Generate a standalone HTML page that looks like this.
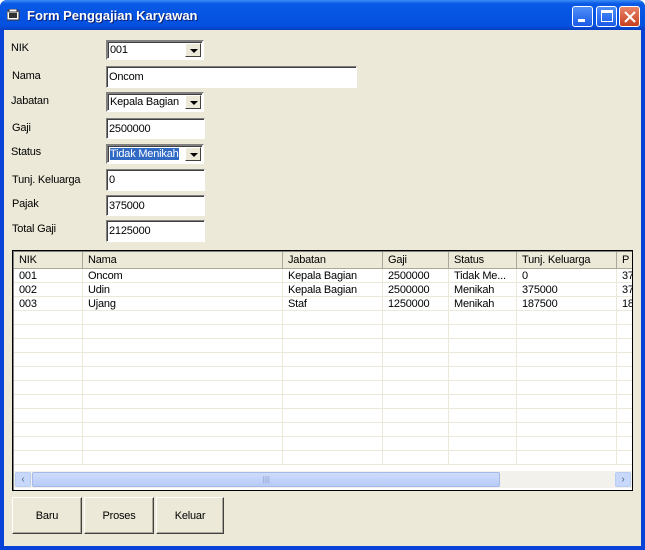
<!DOCTYPE html>
<html><head><style>
*{margin:0;padding:0;box-sizing:border-box}
body{width:645px;height:550px;overflow:hidden;background:#fff;font-family:Tahoma,"Liberation Sans",sans-serif;font-size:11px;color:#000;letter-spacing:-0.2px}
.win{position:absolute;left:0;top:0;width:645px;height:550px;background:#0842d6;border-radius:7px 7px 0 0}
.title{position:absolute;left:0;top:0;width:645px;height:30px;border-radius:7px 7px 0 0;background:linear-gradient(#3d8df5 0,#0a5ae6 12%,#0554e3 50%,#0550df 85%,#0a3fbf 100%)}
.title span{position:absolute;left:27px;top:8px;color:#fff;font-weight:bold;font-size:13px;text-shadow:1px 1px #0a1f70;letter-spacing:0}
.client{position:absolute;left:4px;top:30px;width:637px;height:516px;background:#ece9d8}
.a{position:absolute}
.lbl{position:absolute;font-size:11px}
.tb{position:absolute;background:#fff;border:1px solid #fff;border-top-color:#808080;border-left-color:#808080;padding:4px 2px 0;font-size:11px;line-height:13px;box-shadow:inset 1px 1px #404040}
.cb{position:absolute;background:#fff;border:2px solid;border-color:#808080 #fff #fff #808080;box-shadow:inset 1px 1px #404040;font-size:11px;padding:2px 2px;line-height:13px}
.dd{position:absolute;right:1px;top:1px;width:16px;height:14px;background:#ece9d8;border:1px solid;border-color:#fff #404040 #404040 #fff}
.dd:after{content:"";position:absolute;left:4px;top:5px;border-left:4px solid transparent;border-right:4px solid transparent;border-top:4px solid #000}
.btn{position:absolute;background:#ece9d8;border:1px solid;border-color:#fff #404040 #404040 #fff;box-shadow:inset -1px -1px #aca899;text-align:center;line-height:36px}
.grid{position:absolute;left:12px;top:250px;width:621px;height:241px;border:1px solid #000;background:#fff;box-shadow:inset 1px 1px #808080;overflow:hidden}
.row{position:absolute;left:1px;height:14px;width:620px;border-bottom:1px solid #ece9d8}
.c{position:absolute;top:0;height:100%;padding-left:5px;line-height:14px;white-space:nowrap;overflow:hidden;border-right:1px solid #ece9d8}
.hdr .c{background:#ece9d8;border-right:1px solid #aca899;border-bottom:1px solid #aca899}
</style></head><body>
<div class="win">
<div class="title">
<svg class="a" style="left:7px;top:9px" width="13" height="12"><rect x="0" y="2" width="12" height="9" fill="#fff" stroke="#333"/><rect x="2" y="0" width="8" height="3" fill="#fff" stroke="#333"/><rect x="2" y="4" width="8" height="5" fill="#333"/></svg>
<span>Form Penggajian Karyawan</span>
<div class="a" style="left:572px;top:6px;width:21px;height:21px;border:1px solid #fff;border-radius:3px;background:linear-gradient(#4e8ef8,#1a5ae8)"><div class="a" style="left:5px;top:12px;width:7px;height:3px;background:#fff"></div></div>
<div class="a" style="left:596px;top:6px;width:21px;height:21px;border:1px solid #fff;border-radius:3px;background:linear-gradient(#4e8ef8,#1a5ae8)"><div class="a" style="left:4px;top:3px;width:12px;height:12px;border:1px solid #fff;border-top-width:3px"></div></div>
<div class="a" style="left:619px;top:6px;width:21px;height:21px;border:1px solid #fff;border-radius:3px;background:linear-gradient(#e8836a,#c8401e)"><svg class="a" style="left:4px;top:4px" width="12" height="12"><path d="M1 1L11 11M11 1L1 11" stroke="#fff" stroke-width="2"/></svg></div>
</div>
<div class="client"></div>
</div>

<div class="lbl" style="left:11px;top:42px">NIK</div>
<div class="lbl" style="left:12px;top:70px">Nama</div>
<div class="lbl" style="left:11px;top:95px">Jabatan</div>
<div class="lbl" style="left:12px;top:122px">Gaji</div>
<div class="lbl" style="left:11px;top:146px">Status</div>
<div class="lbl" style="left:12px;top:174px">Tunj. Keluarga</div>
<div class="lbl" style="left:12px;top:198px">Pajak</div>
<div class="lbl" style="left:12px;top:223px">Total Gaji</div>

<div class="cb" style="left:106px;top:40px;width:98px;height:20px">001<div class="dd"></div></div>
<div class="tb" style="left:106px;top:66px;width:251px;height:22px">Oncom</div>
<div class="cb" style="left:106px;top:92px;width:98px;height:20px">Kepala Bagian<div class="dd"></div></div>
<div class="tb" style="left:106px;top:118px;width:99px;height:21px">2500000</div>
<div class="cb" style="left:106px;top:144px;width:98px;height:20px"><span style="background:#316ac5;color:#fff">Tidak Menikah</span><div class="dd"></div></div>
<div class="tb" style="left:106px;top:169px;width:99px;height:22px">0</div>
<div class="tb" style="left:106px;top:195px;width:99px;height:21px">375000</div>
<div class="tb" style="left:106px;top:220px;width:99px;height:22px">2125000</div>

<div class="grid">
<div class="row hdr" style="top:1px;height:17px;border:none">
<div class="c" style="left:0;width:69px;height:17px;line-height:17px">NIK</div>
<div class="c" style="left:69px;width:200px;height:17px;line-height:17px">Nama</div>
<div class="c" style="left:269px;width:100px;height:17px;line-height:17px">Jabatan</div>
<div class="c" style="left:369px;width:66px;height:17px;line-height:17px">Gaji</div>
<div class="c" style="left:435px;width:68px;height:17px;line-height:17px">Status</div>
<div class="c" style="left:503px;width:100px;height:17px;line-height:17px">Tunj. Keluarga</div>
<div class="c" style="left:603px;width:30px;height:17px;line-height:17px">P</div>
</div>
<div id="rows"></div>
<div class="a" style="left:1px;top:220px;width:619px;height:17px;background:#f3f1ec">
<div class="a" style="left:1px;top:1px;width:16px;height:15px;border:1px solid #b8cdf4;border-radius:2px;background:#c7d8fb;color:#4d6185;font-size:10px;line-height:13px;text-align:center">&lsaquo;</div>
<div class="a" style="left:18px;top:1px;width:468px;height:15px;border:1px solid #a3bae9;border-radius:2px;background:linear-gradient(#cfdcfb,#b7cbf6);text-align:center;color:#8ea3d3;font-size:8px;line-height:13px">||||</div>
<div class="a" style="left:601px;top:1px;width:16px;height:15px;border:1px solid #b8cdf4;border-radius:2px;background:#c7d8fb;color:#4d6185;font-size:10px;line-height:13px;text-align:center">&rsaquo;</div>
</div>
</div>
<script>
var d=[["001","Oncom","Kepala Bagian","2500000","Tidak Me...","0","37"],["002","Udin","Kepala Bagian","2500000","Menikah","375000","37"],["003","Ujang","Staf","1250000","Menikah","187500","18"]];
var L=[0,69,269,369,435,503,603],W=[69,200,100,66,68,100,30],h="";
for(var r=0;r<14;r++){h+='<div class="row" style="top:'+(18+r*14)+'px">';for(var i=0;i<7;i++){h+='<div class="c" style="left:'+L[i]+'px;width:'+W[i]+'px">'+(d[r]?d[r][i]:"")+'</div>';}h+='</div>';}
document.getElementById("rows").innerHTML=h;
</script>

<div class="btn" style="left:12px;top:497px;width:70px;height:37px">Baru</div>
<div class="btn" style="left:84px;top:497px;width:70px;height:37px">Proses</div>
<div class="btn" style="left:156px;top:497px;width:68px;height:37px">Keluar</div>
</body></html>
